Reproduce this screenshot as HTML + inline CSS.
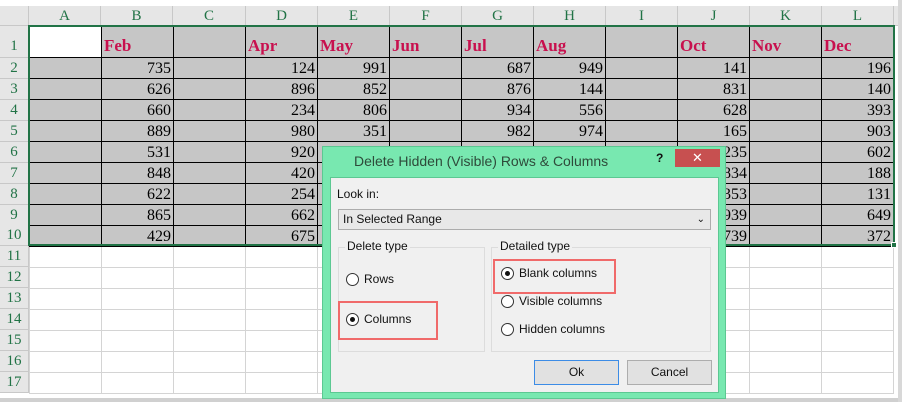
<!DOCTYPE html>
<html><head><meta charset="utf-8"><style>
*{margin:0;padding:0;box-sizing:border-box}
body{width:902px;height:402px;overflow:hidden;background:#fff;position:relative;font-family:"Liberation Serif",serif}
.hdr{position:absolute;top:6px;height:20px;background:#e6e6e6;border-right:1px solid #c8c8c8;border-bottom:1px solid #c8c8c8;color:#217346;font-size:15px;text-align:center;line-height:20px}
.rh{position:absolute;left:0;width:29px;background:#e6e6e6;border-bottom:1px solid #c8c8c8;border-right:1px solid #c8c8c8;color:#217346;font-size:15px;text-align:center}
table{position:absolute;left:29px;top:26px;border-collapse:collapse;table-layout:fixed}
td{width:72px;height:21px;font-size:16px;text-align:right;padding:0 2px;line-height:19px;overflow:hidden}
tr.s td{background:#c6c6c6;border:1px solid #000}
tr.e td{border:1px solid #d4d4d4}
tr.h td{height:31px;text-align:left;vertical-align:bottom;color:#c8104e;font-weight:bold;font-size:17px;line-height:22px}
.sel{position:absolute;left:28px;top:25px;width:867px;height:221px;border:2px solid #217346}
.dlg{position:absolute;left:322px;top:146px;width:404px;height:253px;background:#78e8b0;border:1px solid #5cc892;font-family:"Liberation Sans",sans-serif;font-size:12px;color:#111}
.in{position:absolute;left:7px;top:30px;width:389px;height:216px;background:#f0f0f0;border:1px solid #5cc892}
.a{position:absolute}
.grp{position:absolute;border:1px solid #dcdcdc}
.lbl{position:absolute;background:#f0f0f0;padding:0 2px}
.rad{position:absolute;width:13px;height:13px;border:1px solid #333;border-radius:50%;background:#fff}
.rad.on::after{content:"";position:absolute;left:3px;top:3px;width:5px;height:5px;border-radius:50%;background:#111}
.btn{position:absolute;height:25px;background:#e1e1e1;border:1px solid #adadad;text-align:center;line-height:23px}
.red{position:absolute;border:2px solid #f06a6a}
</style></head><body>
<div style="position:absolute;left:0;top:6px;width:29px;height:20px;background:#e6e6e6;border-right:1px solid #c8c8c8;border-bottom:1px solid #c8c8c8"></div>
<div class="hdr" style="left:29px;width:72px">A</div><div class="hdr" style="left:101px;width:72px">B</div><div class="hdr" style="left:173px;width:73px">C</div><div class="hdr" style="left:246px;width:72px">D</div><div class="hdr" style="left:318px;width:72px">E</div><div class="hdr" style="left:390px;width:72px">F</div><div class="hdr" style="left:462px;width:72px">G</div><div class="hdr" style="left:534px;width:72px">H</div><div class="hdr" style="left:606px;width:72px">I</div><div class="hdr" style="left:678px;width:72px">J</div><div class="hdr" style="left:750px;width:72px">K</div><div class="hdr" style="left:822px;width:72px">L</div><div class="hdr" style="left:894px;width:8px"></div>
<div class="rh" style="top:26px;height:32px;line-height:40px">1</div>
<div class="rh" style="top:58px;height:21px;line-height:21px">2</div>
<div class="rh" style="top:79px;height:21px;line-height:21px">3</div>
<div class="rh" style="top:100px;height:21px;line-height:21px">4</div>
<div class="rh" style="top:121px;height:21px;line-height:21px">5</div>
<div class="rh" style="top:142px;height:21px;line-height:21px">6</div>
<div class="rh" style="top:163px;height:21px;line-height:21px">7</div>
<div class="rh" style="top:184px;height:21px;line-height:21px">8</div>
<div class="rh" style="top:205px;height:21px;line-height:21px">9</div>
<div class="rh" style="top:225px;height:21px;line-height:21px">10</div>
<div class="rh" style="top:246px;height:21px;line-height:21px">11</div>
<div class="rh" style="top:267px;height:21px;line-height:21px">12</div>
<div class="rh" style="top:288px;height:21px;line-height:21px">13</div>
<div class="rh" style="top:309px;height:21px;line-height:21px">14</div>
<div class="rh" style="top:330px;height:21px;line-height:21px">15</div>
<div class="rh" style="top:351px;height:21px;line-height:21px">16</div>
<div class="rh" style="top:372px;height:21px;line-height:21px">17</div>
<table>
<tr class="s h"><td style="background:#fff"></td><td>Feb</td><td></td><td>Apr</td><td>May</td><td>Jun</td><td>Jul</td><td>Aug</td><td></td><td>Oct</td><td>Nov</td><td>Dec</td></tr>
<tr class="s"><td></td><td>735</td><td></td><td>124</td><td>991</td><td></td><td>687</td><td>949</td><td></td><td>141</td><td></td><td>196</td></tr>
<tr class="s"><td></td><td>626</td><td></td><td>896</td><td>852</td><td></td><td>876</td><td>144</td><td></td><td>831</td><td></td><td>140</td></tr>
<tr class="s"><td></td><td>660</td><td></td><td>234</td><td>806</td><td></td><td>934</td><td>556</td><td></td><td>628</td><td></td><td>393</td></tr>
<tr class="s"><td></td><td>889</td><td></td><td>980</td><td>351</td><td></td><td>982</td><td>974</td><td></td><td>165</td><td></td><td>903</td></tr>
<tr class="s"><td></td><td>531</td><td></td><td>920</td><td></td><td></td><td></td><td></td><td></td><td>235</td><td></td><td>602</td></tr>
<tr class="s"><td></td><td>848</td><td></td><td>420</td><td></td><td></td><td></td><td></td><td></td><td>834</td><td></td><td>188</td></tr>
<tr class="s"><td></td><td>622</td><td></td><td>254</td><td></td><td></td><td></td><td></td><td></td><td>353</td><td></td><td>131</td></tr>
<tr class="s"><td></td><td>865</td><td></td><td>662</td><td></td><td></td><td></td><td></td><td></td><td>939</td><td></td><td>649</td></tr>
<tr class="s"><td></td><td>429</td><td></td><td>675</td><td></td><td></td><td></td><td></td><td></td><td>739</td><td></td><td>372</td></tr>
<tr class="e"><td></td><td></td><td></td><td></td><td></td><td></td><td></td><td></td><td></td><td></td><td></td><td></td></tr>
<tr class="e"><td></td><td></td><td></td><td></td><td></td><td></td><td></td><td></td><td></td><td></td><td></td><td></td></tr>
<tr class="e"><td></td><td></td><td></td><td></td><td></td><td></td><td></td><td></td><td></td><td></td><td></td><td></td></tr>
<tr class="e"><td></td><td></td><td></td><td></td><td></td><td></td><td></td><td></td><td></td><td></td><td></td><td></td></tr>
<tr class="e"><td></td><td></td><td></td><td></td><td></td><td></td><td></td><td></td><td></td><td></td><td></td><td></td></tr>
<tr class="e"><td></td><td></td><td></td><td></td><td></td><td></td><td></td><td></td><td></td><td></td><td></td><td></td></tr>
<tr class="e"><td></td><td></td><td></td><td></td><td></td><td></td><td></td><td></td><td></td><td></td><td></td><td></td></tr>
</table>
<div class="sel"></div>
<div style="position:absolute;left:891px;top:242px;width:6px;height:6px;background:#217346;border:1px solid #fff"></div>
<div style="position:absolute;left:0;top:398px;width:902px;height:4px;background:#d0d0d0"></div>
<div style="position:absolute;left:898px;top:0;width:4px;height:402px;background:#d8d8d8"></div>

<div class="dlg">
 <div class="a" style="left:31px;top:6px;font-size:14px;color:#2e4a3a">Delete Hidden (Visible) Rows &amp; Columns</div>
 <div class="a" style="left:333px;top:4px;font-weight:bold;font-size:12px">?</div>
 <div class="a" style="left:352px;top:2px;width:45px;height:18px;background:#c75050;color:#fff;text-align:center;line-height:18px;font-size:13px">✕</div>
 <div class="in">
  <div class="a" style="left:6px;top:9px">Look in:</div>
  <div class="a" style="left:7px;top:31px;width:373px;height:21px;border:1px solid #acacac;background:#e8e8e8;padding-left:4px;line-height:19px">In Selected Range<span style="position:absolute;right:5px;font-size:10px">&#8964;</span></div>
  <div class="grp" style="left:7px;top:69px;width:147px;height:105px"></div>
  <div class="lbl" style="left:14px;top:61px">Delete type</div>
  <div class="grp" style="left:160px;top:69px;width:220px;height:105px"></div>
  <div class="lbl" style="left:167px;top:61px">Detailed type</div>
  <div class="rad" style="left:15px;top:95px"></div><div class="a" style="left:33px;top:94px">Rows</div>
  <div class="rad on" style="left:15px;top:135px"></div><div class="a" style="left:33px;top:134px">Columns</div>
  <div class="red" style="left:7px;top:123px;width:100px;height:39px"></div>
  <div class="rad on" style="left:170px;top:89px"></div><div class="a" style="left:188px;top:88px">Blank columns</div>
  <div class="red" style="left:162px;top:81px;width:123px;height:35px"></div>
  <div class="rad" style="left:170px;top:117px"></div><div class="a" style="left:188px;top:116px">Visible columns</div>
  <div class="rad" style="left:170px;top:145px"></div><div class="a" style="left:188px;top:144px">Hidden columns</div>
  <div class="btn" style="left:203px;top:182px;width:85px;border-color:#3c8ce6">Ok</div>
  <div class="btn" style="left:296px;top:182px;width:85px">Cancel</div>
 </div>
</div>
</body></html>
